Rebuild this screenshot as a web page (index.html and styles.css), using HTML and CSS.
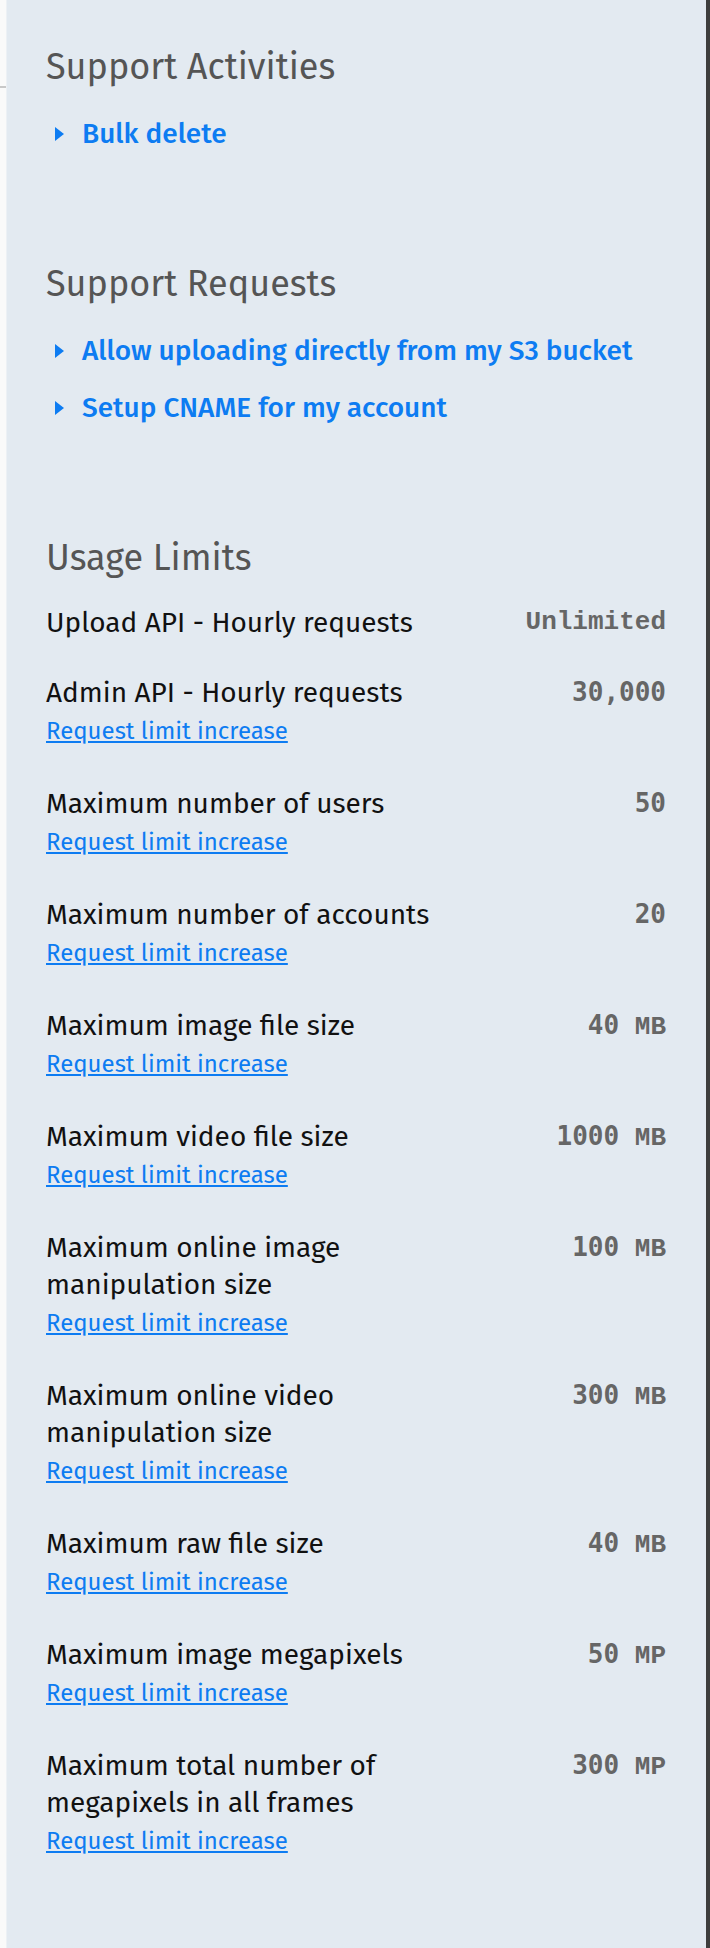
FILE: index.html
```html
<!DOCTYPE html>
<html lang="en">
<head>
  <meta charset="UTF-8" />
  <meta name="viewport" content="width=device-width, initial-scale=1.0" />
  <title>Account limits</title>
  <link rel="stylesheet" href="styles.css">
</head>
<body>
  <div class="page">
    <div class="gutter"><span class="gutter-line"></span></div>

    <main class="panel">
      <section class="block">
        <h2>Support Activities</h2>
        <ul class="actions">
          <li><a href="#">Bulk delete</a></li>
        </ul>
      </section>

      <section class="block">
        <h2>Support Requests</h2>
        <ul class="actions">
          <li><a href="#">Allow uploading directly from my S3 bucket</a></li>
          <li><a href="#">Setup CNAME for my account</a></li>
        </ul>
      </section>

      <section class="block limits">
        <h2>Usage Limits</h2>

        <div class="limit">
          <div class="limit-info">
            <div class="limit-name">Upload API - Hourly requests</div>
          </div>
          <div class="limit-value"><span class="unit">Unlimited</span></div>
        </div>

        <div class="limit">
          <div class="limit-info">
            <div class="limit-name">Admin API - Hourly requests</div>
            <a class="increase" href="#">Request limit increase</a>
          </div>
          <div class="limit-value"><span class="num">30,000</span></div>
        </div>

        <div class="limit">
          <div class="limit-info">
            <div class="limit-name">Maximum number of users</div>
            <a class="increase" href="#">Request limit increase</a>
          </div>
          <div class="limit-value"><span class="num">50</span></div>
        </div>

        <div class="limit">
          <div class="limit-info">
            <div class="limit-name">Maximum number of accounts</div>
            <a class="increase" href="#">Request limit increase</a>
          </div>
          <div class="limit-value"><span class="num">20</span></div>
        </div>

        <div class="limit">
          <div class="limit-info">
            <div class="limit-name">Maximum image file size</div>
            <a class="increase" href="#">Request limit increase</a>
          </div>
          <div class="limit-value"><span class="num">40</span> <span class="unit">MB</span></div>
        </div>

        <div class="limit">
          <div class="limit-info">
            <div class="limit-name">Maximum video file size</div>
            <a class="increase" href="#">Request limit increase</a>
          </div>
          <div class="limit-value"><span class="num">1000</span> <span class="unit">MB</span></div>
        </div>

        <div class="limit">
          <div class="limit-info">
            <div class="limit-name">Maximum online image manipulation size</div>
            <a class="increase" href="#">Request limit increase</a>
          </div>
          <div class="limit-value"><span class="num">100</span> <span class="unit">MB</span></div>
        </div>

        <div class="limit">
          <div class="limit-info">
            <div class="limit-name">Maximum online video manipulation size</div>
            <a class="increase" href="#">Request limit increase</a>
          </div>
          <div class="limit-value"><span class="num">300</span> <span class="unit">MB</span></div>
        </div>

        <div class="limit">
          <div class="limit-info">
            <div class="limit-name">Maximum raw file size</div>
            <a class="increase" href="#">Request limit increase</a>
          </div>
          <div class="limit-value"><span class="num">40</span> <span class="unit">MB</span></div>
        </div>

        <div class="limit">
          <div class="limit-info">
            <div class="limit-name">Maximum image megapixels</div>
            <a class="increase" href="#">Request limit increase</a>
          </div>
          <div class="limit-value"><span class="num">50</span> <span class="unit">MP</span></div>
        </div>

        <div class="limit">
          <div class="limit-info">
            <div class="limit-name">Maximum total number of megapixels in all frames</div>
            <a class="increase" href="#">Request limit increase</a>
          </div>
          <div class="limit-value"><span class="num">300</span> <span class="unit">MP</span></div>
        </div>
      </section>
    </main>

    <div class="edge"></div>
  </div>
</body>
</html>
```

FILE: styles.css
```css
* {
  box-sizing: border-box;
  margin: 0;
  padding: 0;
}

body {
  font-family: "Fira Sans", "Open Sans", Arial, sans-serif;
  background-color: #fafafa;
}

.page {
  display: flex;
  height: 1948px;
  overflow: hidden;
}

.gutter {
  width: 6px;
  background-color: #fafafa;
  padding-top: 86px;
}

.gutter-line {
  display: block;
  height: 2px;
  background-color: #c8c8c8;
}

.panel {
  flex: 1;
  background-color: #e3eaf1;
  border-left: 1px solid #edf1f5;
  padding: 47px 40px 40px 39px;
}

.edge {
  width: 4px;
  background-color: #3d3d3d;
}

h2 {
  font-size: 36px;
  line-height: 40px;
  font-weight: 400;
  color: #555;
}

.block {
  margin-bottom: 112px;
}

.actions {
  list-style: none;
  margin-top: 29px;
  display: flex;
  flex-direction: column;
  gap: 21px;
}

.actions li {
  display: flex;
  align-items: center;
  line-height: 36px;
}

.actions li::before {
  content: "";
  width: 0;
  height: 0;
  border-left: 9px solid #0d7cf2;
  border-top: 7px solid transparent;
  border-bottom: 7px solid transparent;
  margin: 0 18px 0 9px;
}

.actions a {
  color: #0d7cf2;
  font-size: 28px;
  font-weight: 500;
  text-decoration: none;
}

.limits h2 {
  margin-bottom: 26px;
}

.limit {
  display: flex;
  justify-content: space-between;
  align-items: flex-start;
  gap: 20px;
  margin-bottom: 33px;
}

.limit-info {
  flex: 0 1 420px;
}

.limit-name {
  font-size: 28px;
  line-height: 37px;
  font-weight: 400;
  color: #111;
}

.increase {
  display: block;
  margin: 5px 0 6px;
  font-size: 24px;
  line-height: 30px;
  color: #0d7cf2;
  text-decoration: underline;
}

.limit-value {
  font-family: "Liberation Mono", "Courier New", monospace;
  line-height: 37px;
  font-size: 26px;
  color: #666;
  white-space: nowrap;
}

.num {
  font-family: "DejaVu Sans Mono", monospace;
  font-weight: bold;
}

.unit {
  font-weight: bold;
}
```
